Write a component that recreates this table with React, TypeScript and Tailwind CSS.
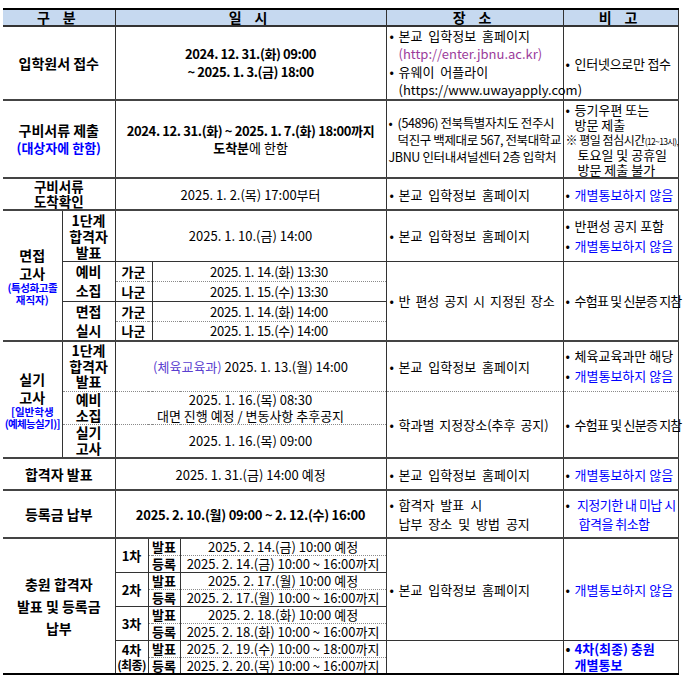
import type { ReactNode } from "react";

// 2025학년도 일정표
const BLUE = "text-[#0000ff]";
const dotB = "[border-bottom-style:dotted] border-b-[#8a8a8a]";
const dotT = "[border-top-style:dotted] border-t-[#8a8a8a]";

type CellProps = {
    children?: ReactNode;
    className?: string;
    rowSpan?: number;
    colSpan?: number;
};

function Cell({ children, className = "", rowSpan, colSpan }: CellProps) {
    return (
        <td
            rowSpan={rowSpan}
            colSpan={colSpan}
            className={`border border-[#333] p-0 text-center align-middle ${className}`}
        >
            {children}
        </td>
    );
}

function Bullet({ children, className = "" }: { children: ReactNode; className?: string }) {
    return (
        <div className={`flex whitespace-nowrap ${className}`}>
            <span className="w-[9px] shrink-0 text-black">•</span>
            <span>{children}</span>
        </div>
    );
}

function Place({ children, className = "" }: { children: ReactNode; className?: string }) {
    return <div className={`px-[3px] text-left ${className}`}>{children}</div>;
}

const extra = [
    { n: "1차", a: "2025. 2. 14.(금) 10:00 예정", b: "2025. 2. 14.(금) 10:00 ~ 16:00까지" },
    { n: "2차", a: "2025. 2. 17.(월) 10:00 예정", b: "2025. 2. 17.(월) 10:00 ~ 16:00까지" },
    { n: "3차", a: "2025. 2. 18.(화) 10:00 예정", b: "2025. 2. 18.(화) 10:00 ~ 16:00까지" },
    { n: "4차", a: "2025. 2. 19.(수) 10:00 ~ 18:00까지", b: "2025. 2. 20.(목) 10:00 ~ 16:00까지" },
];

export default function App() {
    return (
        <div className="bg-white pl-[3px] pt-[8px] text-[13px] leading-[17px] text-black" style={{ fontFamily: '"Noto Sans CJK KR", "Noto Sans", sans-serif' }}>
            <table className="w-[675px] table-fixed border-collapse border-b-2 border-b-black">
                <colgroup>
                    <col className="w-[59px]" />
                    <col className="w-[53px]" />
                    <col className="w-[33px]" />
                    <col className="w-[4px]" />
                    <col className="w-[28px]" />
                    <col className="w-[206px]" />
                    <col className="w-[177px]" />
                    <col className="w-[115px]" />
                </colgroup>
                <thead>
                    <tr className="h-[17px] border-t-2 border-b-2 border-t-black border-b-[#333] bg-[#c6d9f0] text-[14px] font-bold leading-[15px]">
                        <Cell colSpan={2} className="border-l-0 tracking-[0.35em]">구 분</Cell>
                        <Cell colSpan={4} className="tracking-[0.35em]">일 시</Cell>
                        <Cell className="tracking-[0.35em]">장 소</Cell>
                        <Cell className="tracking-[0.35em]">비 고</Cell>
                    </tr>
                </thead>
                <tbody>
                    {/* 입학원서 접수 */}
                    <tr className="h-[74px]">
                        <Cell colSpan={2} className="border-l-0 text-[14px] font-bold">입학원서 접수</Cell>
                        <Cell colSpan={4} className="font-bold leading-[18px] tracking-[-0.03em]">
                            <div>2024. 12. 31.(화) 09:00</div>
                            <div>~ 2025. 1. 3.(금) 18:00</div>
                        </Cell>
                        <Cell>
                            <Place>
                                <div className="leading-[18px]">
                                    <Bullet className="[word-spacing:3px]">본교 입학정보 홈페이지</Bullet>
                                    <div className="pl-[9px] text-[#9b3c9b]">(http://enter.jbnu.ac.kr)</div>
                                    <Bullet className="[word-spacing:3px]">유웨이 어플라이</Bullet>
                                    <div className="pl-[9px]">(https://www.uwayapply.com)</div>
                                </div>
                            </Place>
                        </Cell>
                        <Cell>
                            <Place className="pl-[2px]"><Bullet className="tracking-[-0.02em]">인터넷으로만 접수</Bullet></Place>
                        </Cell>
                    </tr>

                    {/* 구비서류 제출 */}
                    <tr className="h-[78px] border-t-2 border-t-[#444]">
                        <Cell colSpan={2} className="border-l-0 font-bold">
                            <div className="text-[14px]">구비서류 제출</div>
                            <div className={BLUE}>(대상자에 한함)</div>
                        </Cell>
                        <Cell colSpan={4}>
                            <div className="font-bold tracking-[-0.03em]">2024. 12. 31.(화) ~ 2025. 1. 7.(화) 18:00까지</div>
                            <div><span className="font-bold">도착분</span>에 한함</div>
                        </Cell>
                        <Cell>
                            <div className="whitespace-nowrap pl-[2px] text-left text-[12.5px] tracking-[-0.03em]">
                                <Bullet>(54896) 전북특별자치도 전주시</Bullet>
                                <div className="pl-[9px]">덕진구 백제대로 567, 전북대학교</div>
                                <div>JBNU 인터내셔널센터 2층 입학처</div>
                            </div>
                        </Cell>
                        <Cell>
                            <div className="whitespace-nowrap pl-[2px] text-left leading-[15px]">
                                <Bullet className="h-[15px]">등기우편 또는</Bullet>
                                <div className="h-[15px] pl-[9px]">방문 제출</div>
                                <div className="flex h-[15px] items-baseline text-[12px] tracking-[-0.04em]">
                                    <span>※ 평일 점심시간</span>
                                    <span className="text-[8.5px] tracking-[-0.08em]">(12~13시),</span>
                                </div>
                                <div className="h-[15px] pl-[12px]">토요일 및 공휴일</div>
                                <div className="h-[15px] pl-[12px]">방문 제출 불가</div>
                            </div>
                        </Cell>
                    </tr>

                    {/* 구비서류 도착확인 */}
                    <tr className="h-[30px] border-t-2 border-t-[#444]">
                        <Cell colSpan={2} className="border-l-0 text-[13.5px] font-bold leading-[15px]">
                            <div>구비서류</div>
                            <div>도착확인</div>
                        </Cell>
                        <Cell colSpan={4}>2025. 1. 2.(목) 17:00부터</Cell>
                        <Cell><Place><Bullet className="[word-spacing:3px]">본교 입학정보 홈페이지</Bullet></Place></Cell>
                        <Cell><Place className="pl-[2px]"><Bullet><span className={BLUE}>개별통보하지 않음</span></Bullet></Place></Cell>
                    </tr>

                    {/* 면접고사 */}
                    <tr className="h-[51px] border-t-2 border-t-[#444]">
                        <Cell rowSpan={5} className="border-l-0 font-bold">
                            <div className="text-[14px] leading-[18px]">면접</div>
                            <div className="text-[14px] leading-[18px]">고사</div>
                            <div className={`${BLUE} text-[10.5px] leading-[12px] tracking-[-0.04em]`}>(특성화고졸</div>
                            <div className={`${BLUE} text-[10.5px] leading-[12px]`}>재직자)</div>
                        </Cell>
                        <Cell className="text-[14px] font-bold leading-[16px]">
                            <div>1단계</div>
                            <div>합격자</div>
                            <div>발표</div>
                        </Cell>
                        <Cell colSpan={4}>2025. 1. 10.(금) 14:00</Cell>
                        <Cell><Place><Bullet className="[word-spacing:3px]">본교 입학정보 홈페이지</Bullet></Place></Cell>
                        <Cell>
                            <Place className="pl-[2px]">
                                <div className="leading-[20px]">
                                    <Bullet>반편성 공지 포함</Bullet>
                                    <Bullet><span className={BLUE}>개별통보하지 않음</span></Bullet>
                                </div>
                            </Place>
                        </Cell>
                    </tr>
                    <tr className="h-[20px]">
                        <Cell rowSpan={2} className="text-[14px] font-bold leading-[19px]">
                            <div>예비</div>
                            <div>소집</div>
                        </Cell>
                        <Cell colSpan={2} className={`font-bold ${dotB}`}>가군</Cell>
                        <Cell colSpan={2} className={`tracking-[-0.02em] ${dotB}`}>2025. 1. 14.(화) 13:30</Cell>
                        <Cell rowSpan={4}><Place><Bullet className="[word-spacing:2px]">반 편성 공지 시 지정된 장소</Bullet></Place></Cell>
                        <Cell rowSpan={4}><Place className="pl-[2px]"><Bullet className="tracking-[-0.06em]">수험표 및 신분증 지참</Bullet></Place></Cell>
                    </tr>
                    <tr className="h-[20px]">
                        <Cell colSpan={2} className={`font-bold ${dotT}`}>나군</Cell>
                        <Cell colSpan={2} className={`tracking-[-0.02em] ${dotT}`}>2025. 1. 15.(수) 13:30</Cell>
                    </tr>
                    <tr className="h-[20px]">
                        <Cell rowSpan={2} className="text-[14px] font-bold leading-[19px]">
                            <div>면접</div>
                            <div>실시</div>
                        </Cell>
                        <Cell colSpan={2} className={`font-bold ${dotB}`}>가군</Cell>
                        <Cell colSpan={2} className={`tracking-[-0.02em] ${dotB}`}>2025. 1. 14.(화) 14:00</Cell>
                    </tr>
                    <tr className="h-[20px]">
                        <Cell colSpan={2} className={`font-bold ${dotT}`}>나군</Cell>
                        <Cell colSpan={2} className={`tracking-[-0.02em] ${dotT}`}>2025. 1. 15.(수) 14:00</Cell>
                    </tr>

                    {/* 실기고사 */}
                    <tr className="h-[50px] border-t-2 border-t-[#444]">
                        <Cell rowSpan={3} className="border-l-0 font-bold">
                            <div className="text-[14px] leading-[18px]">실기</div>
                            <div className="text-[14px] leading-[18px]">고사</div>
                            <div className={`${BLUE} text-[10.5px] leading-[12px]`}>[일반학생</div>
                            <div className={`${BLUE} text-[10.5px] leading-[12px] tracking-[-0.06em]`}>(예체능실기)]</div>
                        </Cell>
                        <Cell className={`text-[14px] font-bold leading-[15.5px] ${dotB}`}>
                            <div>1단계</div>
                            <div>합격자</div>
                            <div>발표</div>
                        </Cell>
                        <Cell colSpan={4} className={dotB}>
                            <span className="text-[#5b3fd0]">(체육교육과)</span> 2025. 1. 13.(월) 14:00
                        </Cell>
                        <Cell className={dotB}><Place><Bullet className="[word-spacing:3px]">본교 입학정보 홈페이지</Bullet></Place></Cell>
                        <Cell className={dotB}>
                            <Place className="pl-[2px]">
                                <div className="leading-[20px]">
                                    <Bullet>체육교육과만 해당</Bullet>
                                    <Bullet><span className={BLUE}>개별통보하지 않음</span></Bullet>
                                </div>
                            </Place>
                        </Cell>
                    </tr>
                    <tr className="h-[33px]">
                        <Cell className={`text-[14px] font-bold leading-[15.5px] ${dotT} ${dotB}`}>
                            <div>예비</div>
                            <div>소집</div>
                        </Cell>
                        <Cell colSpan={4} className={`leading-[15.5px] ${dotT} ${dotB}`}>
                            <div>2025. 1. 16.(목) 08:30</div>
                            <div>대면 진행 예정 / 변동사항 추후공지</div>
                        </Cell>
                        <Cell rowSpan={2} className={dotT}><Place><Bullet className="[word-spacing:2px]">학과별 지정장소(추후 공지)</Bullet></Place></Cell>
                        <Cell rowSpan={2} className={dotT}><Place className="pl-[2px]"><Bullet className="tracking-[-0.06em]">수험표 및 신분증 지참</Bullet></Place></Cell>
                    </tr>
                    <tr className="h-[34px]">
                        <Cell className={`text-[14px] font-bold leading-[15.5px] ${dotT}`}>
                            <div>실기</div>
                            <div>고사</div>
                        </Cell>
                        <Cell colSpan={4} className={dotT}>2025. 1. 16.(목) 09:00</Cell>
                    </tr>

                    {/* 합격자 발표 */}
                    <tr className="h-[32px] border-t-2 border-t-[#444]">
                        <Cell colSpan={2} className="border-l-0 text-[14px] font-bold">합격자 발표</Cell>
                        <Cell colSpan={4}>2025. 1. 31.(금) 14:00 예정</Cell>
                        <Cell><Place><Bullet className="[word-spacing:3px]">본교 입학정보 홈페이지</Bullet></Place></Cell>
                        <Cell><Place className="pl-[2px]"><Bullet><span className={BLUE}>개별통보하지 않음</span></Bullet></Place></Cell>
                    </tr>

                    {/* 등록금 납부 */}
                    <tr className="h-[48px] border-t-2 border-t-[#444]">
                        <Cell colSpan={2} className="border-l-0 text-[14px] font-bold">등록금 납부</Cell>
                        <Cell colSpan={4} className="font-bold tracking-[-0.02em]">2025. 2. 10.(월) 09:00 ~ 2. 12.(수) 16:00</Cell>
                        <Cell>
                            <Place>
                                <div className="leading-[19px] [word-spacing:3px]">
                                    <Bullet>합격자 발표 시</Bullet>
                                    <div className="pl-[9px]">납부 장소 및 방법 공지</div>
                                </div>
                            </Place>
                        </Cell>
                        <Cell>
                            <Place className="pl-[2px]">
                                <div className={`leading-[19px] tracking-[-0.04em] ${BLUE}`}>
                                    <Bullet>&nbsp;지정기한 내 미납 시</Bullet>
                                    <div className="pl-[13px]">합격을 취소함</div>
                                </div>
                            </Place>
                        </Cell>
                    </tr>

                    {/* 충원 합격자 */}
                    {extra.flatMap((r, i) => [
                        <tr key={`${r.n}-a`} className={`h-[17px] ${i === 0 ? "border-t-2 border-t-[#444]" : ""}`}>
                            {i === 0 && (
                                <Cell rowSpan={8} colSpan={2} className="border-l-0 text-[14px] font-bold leading-[22px]">
                                    <div>충원 합격자</div>
                                    <div>발표 및 등록금</div>
                                    <div>납부</div>
                                </Cell>
                            )}
                            <Cell rowSpan={2} className="font-bold leading-[15px]">
                                {i === 3 ? (
                                    <>
                                        <div>4차</div>
                                        <div className="text-[12px] tracking-[-0.05em]">(최종)</div>
                                    </>
                                ) : (
                                    r.n
                                )}
                            </Cell>
                            <Cell colSpan={2} className={`font-bold leading-[15px] ${dotB}`}>발표</Cell>
                            <Cell className={`leading-[15px] ${dotB}`}>{r.a}</Cell>
                            {i === 0 && <Cell rowSpan={6}><Place><Bullet className="[word-spacing:3px]">본교 입학정보 홈페이지</Bullet></Place></Cell>}
                            {i === 0 && <Cell rowSpan={6}><Place className="pl-[2px]"><Bullet><span className={BLUE}>개별통보하지 않음</span></Bullet></Place></Cell>}
                            {i === 3 && <Cell rowSpan={2} />}
                            {i === 3 && (
                                <Cell rowSpan={2}>
                                    <Place className="pl-[2px]">
                                        <div className={`font-bold leading-[16px] ${BLUE}`}>
                                            <Bullet>4차(최종) 충원</Bullet>
                                            <div className="pl-[9px]">개별통보</div>
                                        </div>
                                    </Place>
                                </Cell>
                            )}
                        </tr>,
                        <tr key={`${r.n}-b`} className="h-[17px]">
                            <Cell colSpan={2} className={`font-bold leading-[15px] ${dotT}`}>등록</Cell>
                            <Cell className={`leading-[15px] ${dotT}`}>{r.b}</Cell>
                        </tr>,
                    ])}
                </tbody>
            </table>
        </div>
    );
}
